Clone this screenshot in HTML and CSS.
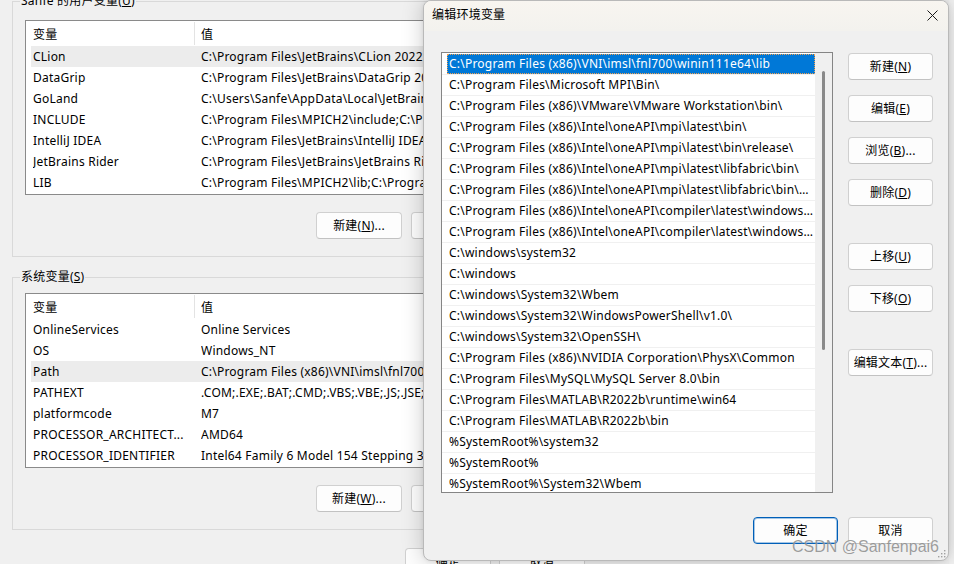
FILE: index.html
```html
<!DOCTYPE html>
<html lang="zh-CN">
<head>
<meta charset="utf-8">
<title>编辑环境变量</title>
<link rel="stylesheet" href="styles.css">
</head>
<body>
<div class="desk">
  <div class="mainwin">
    <fieldset class="group g-user">
      <legend>Sanfe 的用户变量(<u>U</u>)</legend>
      <div class="vlist">
        <div class="vhead"><span class="c1">变量</span><span class="sep"></span><span class="c2">值</span></div>
        <div class="vrow hl"><span class="c1">CLion</span><span class="c2">C:\Program Files\JetBrains\CLion 2022.2.4\bin;</span></div>
        <div class="vrow"><span class="c1">DataGrip</span><span class="c2">C:\Program Files\JetBrains\DataGrip 2022.2.5\bin;</span></div>
        <div class="vrow"><span class="c1">GoLand</span><span class="c2">C:\Users\Sanfe\AppData\Local\JetBrains\Toolbox\scripts;</span></div>
        <div class="vrow"><span class="c1">INCLUDE</span><span class="c2">C:\Program Files\MPICH2\include;C:\Program Files (x86)\Intel\oneAPI</span></div>
        <div class="vrow"><span class="c1">IntelliJ IDEA</span><span class="c2">C:\Program Files\JetBrains\IntelliJ IDEA 2022.2.3\bin;</span></div>
        <div class="vrow"><span class="c1">JetBrains Rider</span><span class="c2">C:\Program Files\JetBrains\JetBrains Rider 2022.2.3\bin;</span></div>
        <div class="vrow"><span class="c1">LIB</span><span class="c2">C:\Program Files\MPICH2\lib;C:\Program Files (x86)\Intel\oneAPI</span></div>
      </div>
      <div class="gbtns">
        <button class="btn">新建(<u>N</u>)...</button>
        <button class="btn" aria-label="编辑(E)..."></button>
      </div>
    </fieldset>

    <fieldset class="group g-sys">
      <legend>系统变量(<u>S</u>)</legend>
      <div class="vlist">
        <div class="vhead"><span class="c1">变量</span><span class="sep"></span><span class="c2">值</span></div>
        <div class="vrow"><span class="c1">OnlineServices</span><span class="c2">Online Services</span></div>
        <div class="vrow"><span class="c1">OS</span><span class="c2">Windows_NT</span></div>
        <div class="vrow hl"><span class="c1">Path</span><span class="c2">C:\Program Files (x86)\VNI\imsl\fnl700\winin111e64\lib;C:\Program Files</span></div>
        <div class="vrow"><span class="c1">PATHEXT</span><span class="c2">.COM;.EXE;.BAT;.CMD;.VBS;.VBE;.JS;.JSE;.WSF;.WSH;.MSC</span></div>
        <div class="vrow"><span class="c1">platformcode</span><span class="c2">M7</span></div>
        <div class="vrow"><span class="c1">PROCESSOR_ARCHITECT...</span><span class="c2">AMD64</span></div>
        <div class="vrow"><span class="c1">PROCESSOR_IDENTIFIER</span><span class="c2">Intel64 Family 6 Model 154 Stepping 3, GenuineIntel</span></div>
      </div>
      <div class="gbtns">
        <button class="btn">新建(<u>W</u>)...</button>
        <button class="btn" aria-label="编辑(I)..."></button>
      </div>
    </fieldset>

    <div class="winbtns">
      <button class="btn">确定</button>
      <button class="btn">取消</button>
    </div>
  </div>

  <div class="dialog">
    <div class="titlebar">
      <span class="title">编辑环境变量</span>
      <svg class="close" width="11" height="11" viewBox="0 0 11 11"><path d="M0.5 0.5 L10.5 10.5 M10.5 0.5 L0.5 10.5" stroke="#1a1a1a" stroke-width="1" fill="none"/></svg>
    </div>
    <div class="dbody">
      <div class="plist">
        <div class="prows">
          <div class="prow sel"><span class="pt">C:\Program Files (x86)\VNI\imsl\fnl700\winin111e64\lib</span></div>
          <div class="prow"><span class="pt">C:\Program Files\Microsoft MPI\Bin\</span></div>
          <div class="prow"><span class="pt">C:\Program Files (x86)\VMware\VMware Workstation\bin\</span></div>
          <div class="prow"><span class="pt">C:\Program Files (x86)\Intel\oneAPI\mpi\latest\bin\</span></div>
          <div class="prow"><span class="pt">C:\Program Files (x86)\Intel\oneAPI\mpi\latest\bin\release\</span></div>
          <div class="prow"><span class="pt">C:\Program Files (x86)\Intel\oneAPI\mpi\latest\libfabric\bin\</span></div>
          <div class="prow"><span class="pt">C:\Program Files (x86)\Intel\oneAPI\mpi\latest\libfabric\bin\utils\</span></div>
          <div class="prow"><span class="pt">C:\Program Files (x86)\Intel\oneAPI\compiler\latest\windows\bin\</span></div>
          <div class="prow"><span class="pt">C:\Program Files (x86)\Intel\oneAPI\compiler\latest\windows\lib\</span></div>
          <div class="prow"><span class="pt">C:\windows\system32</span></div>
          <div class="prow"><span class="pt">C:\windows</span></div>
          <div class="prow"><span class="pt">C:\windows\System32\Wbem</span></div>
          <div class="prow"><span class="pt">C:\windows\System32\WindowsPowerShell\v1.0\</span></div>
          <div class="prow"><span class="pt">C:\windows\System32\OpenSSH\</span></div>
          <div class="prow"><span class="pt">C:\Program Files (x86)\NVIDIA Corporation\PhysX\Common</span></div>
          <div class="prow"><span class="pt">C:\Program Files\MySQL\MySQL Server 8.0\bin</span></div>
          <div class="prow"><span class="pt">C:\Program Files\MATLAB\R2022b\runtime\win64</span></div>
          <div class="prow"><span class="pt">C:\Program Files\MATLAB\R2022b\bin</span></div>
          <div class="prow"><span class="pt">%SystemRoot%\system32</span></div>
          <div class="prow"><span class="pt">%SystemRoot%</span></div>
          <div class="prow"><span class="pt">%SystemRoot%\System32\Wbem</span></div>
        </div>
        <div class="scroll"><div class="thumb"></div></div>
      </div>
      <div class="sidebtns">
        <button class="btn">新建(<u>N</u>)</button>
        <button class="btn">编辑(<u>E</u>)</button>
        <button class="btn">浏览(<u>B</u>)...</button>
        <button class="btn">删除(<u>D</u>)</button>
        <button class="btn gap">上移(<u>U</u>)</button>
        <button class="btn">下移(<u>O</u>)</button>
        <button class="btn gap">编辑文本(<u>T</u>)...</button>
      </div>
    </div>
    <div class="dfoot">
      <button class="btn primary">确定</button>
      <button class="btn">取消</button>
    </div>
    <svg class="grip" width="8" height="8" viewBox="0 0 8 8"><g fill="#a0a0a0"><rect x="6" y="0" width="1.4" height="1.4"/><rect x="3" y="3" width="1.4" height="1.4"/><rect x="6" y="3" width="1.4" height="1.4"/><rect x="0" y="6" width="1.4" height="1.4"/><rect x="3" y="6" width="1.4" height="1.4"/><rect x="6" y="6" width="1.4" height="1.4"/></g></svg>
  </div>

  <div class="watermark">CSDN @Sanfenpai6</div>
</div>
</body>
</html>
```

FILE: styles.css
```css
* { box-sizing: border-box; }
html, body { margin: 0; padding: 0; }
body {
  width: 954px;
  height: 564px;
  overflow: hidden;
  background: #f0f0f0;
  font-family: "Noto Sans", "Noto Sans CJK SC", sans-serif;
  font-size: 12px;
  letter-spacing: 0.22px;
  color: #000;
}
u { text-decoration: underline; text-underline-offset: 1px; }

.desk {
  position: relative;
  width: 954px;
  height: 564px;
  overflow: hidden;
  background: #f3f3f3;
}

/* ---------- background window ---------- */
.mainwin {
  width: 949px;
  height: 580px;
  margin-top: -7px;
  background: #f0f0f0;
}
.group {
  margin: 0 0 0 12px;
  padding: 0 0 17px 7px;
  border: 1px solid #d9d9d9;
  border-right: 0;
  width: 416px;
  min-width: 0;
  overflow: hidden;
}
.group legend {
  padding: 0 1px;
  height: 16px;
  line-height: 16px;
}
.g-sys { margin-top: 12px; }

.vlist {
  margin: 11px 0 0 5px;
  width: 404px;
  border: 1px solid #8a8a8a;
  border-right: 0;
  background: #fff;
  padding: 0 0 1px 5px;
}
.g-sys .vlist { margin-top: 8px; }
.vhead {
  height: 25px;
  display: flex;
  align-items: center;
  padding-left: 2px;
}
.vhead .sep {
  width: 1px;
  height: 23px;
  background: #e3e3e3;
  margin-left: -9px;
  margin-right: 6px;
}
.vrow {
  height: 21px;
  display: flex;
  align-items: center;
  padding-left: 2px;
  white-space: nowrap;
}
.vrow.hl { background: #ececec; }
.c1 { width: 168px; flex: none; overflow: hidden; white-space: nowrap; }
.vhead .c1 { width: 170px; }
.c2 { white-space: nowrap; overflow: hidden; }

.gbtns {
  display: flex;
  gap: 9px;
  margin: 17px 0 0 296px;
}
.winbtns {
  display: flex;
  gap: 8px;
  margin: 18px 0 0 405px;
}

.btn {
  width: 86px;
  height: 27px;
  padding: 0;
  font: inherit;
  letter-spacing: inherit;
  color: #000;
  background: #fdfdfd;
  border: 1px solid #d0d0d0;
  border-bottom-color: #c2c2c2;
  border-radius: 4px;
  text-align: center;
  line-height: 25px;
  flex: none;
}

/* ---------- dialog ---------- */
.dialog {
  position: absolute;
  left: 423px;
  top: 0;
  width: 526px;
  height: 561px;
  background: #f0f0f0;
  border: 1px solid #b9b9b9;
  border-radius: 8px;
  box-shadow: 0 0 22px rgba(0, 0, 0, 0.2), 0 0 4px rgba(0, 0, 0, 0.08);
  overflow: hidden;
  display: flex;
  flex-direction: column;
}
.titlebar {
  height: 30px;
  flex: none;
  display: flex;
  align-items: center;
  justify-content: space-between;
  padding: 0 10px 2px 8px;
  background: linear-gradient(#f8f5f0, #f3f2ee);
}
.title { line-height: 16px; }
.close { display: block; }

.dbody {
  display: flex;
  padding: 21px 15px 0 17px;
}
.plist {
  width: 392px;
  height: 441px;
  border: 1px solid #858585;
  background: #fff;
  display: flex;
  flex: none;
}
.prows {
  flex: 1;
  min-width: 0;
  padding-top: 1px;
  overflow: hidden;
}
.prow {
  height: 21px;
  border-bottom: 1px solid #f0f0f0;
  padding-left: 5px;
}
.pt {
  display: block;
  height: 20px;
  line-height: 20px;
  padding-left: 2px;
  white-space: nowrap;
  overflow: hidden;
  text-overflow: ellipsis;
}
.prow.sel .pt {
  background: #0078d7;
  color: #fff;
  outline: 1px dotted #f0a050;
  outline-offset: -1px;
}
.scroll {
  width: 17px;
  flex: none;
  background: #f0f0f0;
  padding: 18px 0 0 7px;
}
.thumb {
  width: 3px;
  height: 279px;
  border-radius: 2px;
  background: #8a8a8a;
}

.sidebtns {
  display: flex;
  flex-direction: column;
  gap: 15px;
  margin-left: 15px;
  padding-top: 1px;
}
.sidebtns .btn { width: 85px; }
.sidebtns .gap { margin-top: 22px; }

.dfoot {
  display: flex;
  justify-content: flex-end;
  gap: 10px;
  padding: 24px 15px 0 0;
}
.dfoot .btn { width: 85px; }
.btn.primary {
  border: 1px solid #005fb8;
  box-shadow: inset 0 0 0 1px rgba(0, 95, 184, 0.35);
}
.grip {
  position: absolute;
  right: 2px;
  bottom: 2px;
}

.watermark {
  position: absolute;
  right: 15px;
  top: 537px;
  font-family: "Liberation Sans", Arial, sans-serif;
  font-size: 16px;
  line-height: 20px;
  letter-spacing: 0;
  color: rgba(120, 120, 120, 0.72);
  text-shadow: 0 0 1px rgba(255, 255, 255, 0.6);
}
```
